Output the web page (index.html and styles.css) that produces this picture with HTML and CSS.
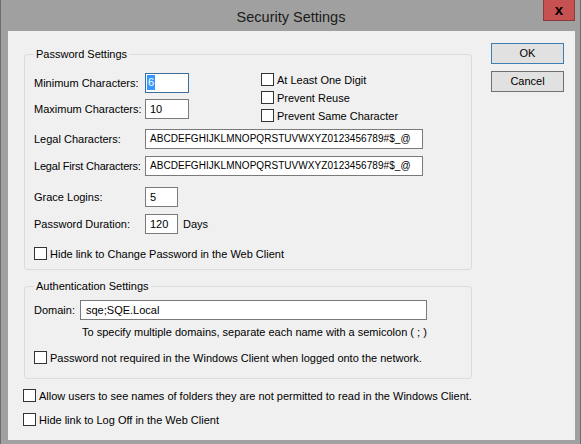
FILE: index.html
```html
<!DOCTYPE html>
<html>
<head>
<meta charset="utf-8">
<link rel="stylesheet" href="styles.css">
</head>
<body>
<div class="window">
  <div class="titlebar">
    <span></span>
    <span class="title">Security Settings</span>
    <div class="close">x</div>
  </div>
  <div class="client">
    <div class="main">
      <fieldset class="group pw">
        <legend>Password Settings</legend>
        <div class="pw-top">
          <div class="pw-left">
            <div class="row"><span class="lbl">Minimum Characters:</span><div class="tb short focus"><span class="sel">6</span></div></div>
            <div class="row"><span class="lbl">Maximum Characters:</span><div class="tb short">10</div></div>
          </div>
          <div class="pw-checks">
            <div class="check"><span class="box"></span><span>At Least One Digit</span></div>
            <div class="check"><span class="box"></span><span>Prevent Reuse</span></div>
            <div class="check"><span class="box"></span><span>Prevent Same Character</span></div>
          </div>
        </div>
        <div class="row legal"><span class="lbl">Legal Characters:</span><div class="tb long chars">ABCDEFGHIJKLMNOPQRSTUVWXYZ0123456789#$_@</div></div>
        <div class="row legal2"><span class="lbl tight">Legal First Characters:</span><div class="tb long chars">ABCDEFGHIJKLMNOPQRSTUVWXYZ0123456789#$_@</div></div>
        <div class="row grace"><span class="lbl">Grace Logins:</span><div class="tb tiny">5</div></div>
        <div class="row dur"><span class="lbl">Password Duration:</span><div class="tb tiny">120</div><span class="unit">Days</span></div>
        <div class="check hide"><span class="box"></span><span>Hide link to Change Password in the Web Client</span></div>
      </fieldset>
      <fieldset class="group auth">
        <legend>Authentication Settings</legend>
        <div class="row"><span class="lbl dom">Domain:</span><div class="tb domain">sqe;SQE.Local</div></div>
        <div class="hint">To specify multiple domains, separate each name with a semicolon ( ; )</div>
        <div class="check nopw"><span class="box"></span><span>Password not required in the Windows Client when logged onto the network.</span></div>
      </fieldset>
      <div class="check allow"><span class="box"></span><span>Allow users to see names of folders they are not permitted to read in the Windows Client.</span></div>
      <div class="check logoff"><span class="box"></span><span>Hide link to Log Off in the Web Client</span></div>
    </div>
    <div class="buttons">
      <div class="btn default">OK</div>
      <div class="btn">Cancel</div>
    </div>
  </div>
</div>
</body>
</html>
```
FILE: styles.css
```css
html, body {
  margin: 0;
  padding: 0;
}
body {
  font-family: "Liberation Sans", Arial, sans-serif;
  font-size: 11px;
  color: #000;
}
.window {
  width: 581px;
  height: 444px;
  box-sizing: border-box;
  background: #a0a0a0;
  border-left: 1px solid #6e6e6e;
  border-right: 1px solid #6e6e6e;
  display: flex;
  flex-direction: column;
}
.titlebar {
  height: 31px;
  flex: none;
  display: grid;
  grid-template-columns: 1fr auto 1fr;
  align-items: start;
  padding-left: 6px;
  padding-right: 5px;
}
.title {
  font-size: 14.5px;
  color: #1b1b1b;
  line-height: 16px;
  margin-top: 9px;
}
.close {
  justify-self: end;
  width: 32px;
  height: 21px;
  box-sizing: border-box;
  background: #c75050;
  border: 1px solid #8f3a3a;
  border-top: none;
  color: #000;
  font-weight: bold;
  font-size: 15px;
  line-height: 19px;
  text-align: center;
}
.client {
  flex: 1;
  margin: 0 5px 4px 7px;
  background: #f0f0f0;
  display: flex;
  align-items: flex-start;
}
.main {
  width: 448px;
  margin-left: 16px;
  padding-top: 15px;
}
.group {
  margin: 0;
  border: 1px solid #dcdcdc;
  border-radius: 3px;
  padding: 11px 9px 9px 9px;
  min-width: 0;
}
legend {
  padding: 0 2px;
  line-height: 16px;
  margin-left: 0;
}
.pw-top {
  display: flex;
}
.pw-left {
  display: flex;
  flex-direction: column;
  gap: 6px;
}
.pw-checks {
  display: flex;
  flex-direction: column;
  gap: 5px;
  margin-left: 72px;
}
.row {
  display: flex;
  align-items: center;
  height: 20px;
}
.lbl {
  width: 111px;
  flex: none;
  white-space: nowrap;
}
.lbl.tight {
  letter-spacing: -0.2px;
}
.tb {
  flex: none;
  height: 20px;
  box-sizing: border-box;
  border: 1px solid #7a7a7a;
  background: #fff;
  padding-left: 4px;
  line-height: 18px;
  white-space: nowrap;
  overflow: hidden;
}
.tb.chars {
  font-size: 10px;
  letter-spacing: 0.05px;
}
.tb.focus {
  border-color: #3c6e9c;
  padding-left: 1px;
}
.sel {
  display: inline-block;
  background: #3399ff;
  color: #fff;
  line-height: 15px;
  padding: 0 1px;
  margin-top: 1px;
  vertical-align: top;
}
.short { width: 44px; }
.tiny { width: 33px; }
.long { width: 278px; }
.legal { margin-top: 7px; }
.legal2 { margin-top: 7px; }
.grace { margin-top: 11px; }
.dur { margin-top: 7px; }
.unit { margin-left: 5px; }
.check {
  display: flex;
  align-items: center;
  height: 13px;
  gap: 3px;
  white-space: nowrap;
}
.box {
  width: 13px;
  height: 13px;
  box-sizing: border-box;
  border: 1px solid #333;
  background: #fff;
  flex: none;
}
.hide { margin-top: 13px; }
.auth {
  margin-top: 8px;
  padding: 6px 9px 14px 9px;
}
.dom { width: 46px; }
.domain { width: 347px; padding-left: 5px; }
.hint {
  margin-left: 48px;
  margin-top: 5px;
  line-height: 14px;
}
.nopw { margin-top: 12px; }
.allow { margin-top: 10px; margin-left: -1px; }
.logoff { margin-top: 11px; margin-left: -1px; }
.buttons {
  margin-left: 19px;
  margin-top: 12px;
  display: flex;
  flex-direction: column;
  gap: 7px;
}
.btn {
  width: 73px;
  height: 21px;
  box-sizing: border-box;
  border: 1px solid #707070;
  background: #e1e1e1;
  text-align: center;
  line-height: 19px;
}
.btn.default {
  border-color: #3c7fb1;
}
```
